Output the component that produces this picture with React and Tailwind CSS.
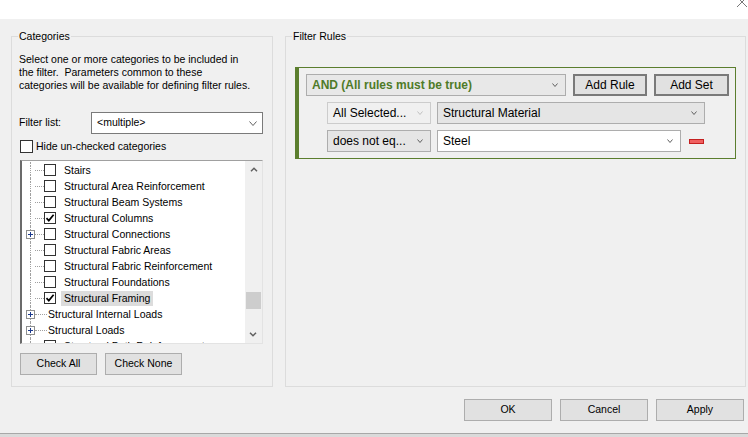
import React from "react";

const Chevron = ({ color = "#606060", w = 7, h = 4 }) => (
  <svg width={w} height={h} viewBox={`0 0 ${w} ${h}`}>
    <path d={`M0.5 0.5L${w / 2} ${h - 0.5}L${w - 0.5} 0.5`} fill="none" stroke={color} strokeWidth="1" />
  </svg>
);

const UpChevron = () => (
  <svg width="8" height="5" viewBox="0 0 8 5">
    <path d="M1 4.2L4 1.2L7 4.2" fill="none" stroke="#606060" strokeWidth="1.5" />
  </svg>
);

const CheckBox = ({ checked }) => (
  <div className="w-[12px] h-[12px] shrink-0 border border-[#333333] bg-white flex items-center justify-center">
    {checked && (
      <svg width="10" height="10" viewBox="0 0 10 10">
        <path d="M1.5 5.2L3.8 7.6L8.6 1.8" fill="none" stroke="#000" strokeWidth="1.7" />
      </svg>
    )}
  </div>
);

const PlusBox = () => (
  <div className="w-[9px] h-[9px] shrink-0 border border-[#8e8f8f] bg-white flex items-center justify-center">
    <svg width="7" height="7" viewBox="0 0 7 7">
      <path d="M1 3.5H6M3.5 1V6" stroke="#1c3a8e" strokeWidth="1" />
    </svg>
  </div>
);

const rows = [
  { label: "Stairs", level: 2 },
  { label: "Structural Area Reinforcement", level: 2 },
  { label: "Structural Beam Systems", level: 2 },
  { label: "Structural Columns", level: 2, checked: true },
  { label: "Structural Connections", level: 2, plus: true },
  { label: "Structural Fabric Areas", level: 2 },
  { label: "Structural Fabric Reinforcement", level: 2 },
  { label: "Structural Foundations", level: 2 },
  { label: "Structural Framing", level: 2, checked: true, selected: true },
  { label: "Structural Internal Loads", level: 1, plus: true },
  { label: "Structural Loads", level: 1, plus: true },
  { label: "Structural Path Reinforcement", level: 2 },
];

const TreeRow = ({ row }) => (
  <div className="flex items-center h-[16px] shrink-0">
    <div className="w-[4px]" />
    {/* vertical connector / expander */}
    <div className="w-[9px] h-full flex flex-col items-center shrink-0">
      <div className="flex-1 border-l border-dotted border-[#a0a0a0]" />
      {row.plus ? <PlusBox /> : <div className="h-[9px] border-l border-dotted border-[#a0a0a0]" />}
      <div className="flex-1 border-l border-dotted border-[#a0a0a0]" />
    </div>
    {row.level === 2 ? (
      <>
        <div className="w-[9px] border-t border-dotted border-[#a0a0a0]" />
        <CheckBox checked={row.checked} />
        <span className={`ml-[5px] px-[3px] leading-[15px] whitespace-nowrap ${row.selected ? "bg-[#dcdcdc]" : ""}`}>
          {row.label}
        </span>
      </>
    ) : (
      <>
        <div className="w-[12px] border-t border-dotted border-[#a0a0a0]" />
        <span className="ml-[1px] leading-[15px] whitespace-nowrap">{row.label}</span>
      </>
    )}
  </div>
);

const Button = ({ children, className = "" }) => (
  <button className={`h-[22px] border border-[#adadad] bg-[#e1e1e1] flex items-center justify-center ${className}`}>
    {children}
  </button>
);

const Combo = ({ className, children, chev = "#606060" }) => (
  <div className={`h-[22px] flex items-center justify-between pl-[5px] pr-[7px] border shrink-0 ${className}`}>
    <span className="whitespace-nowrap">{children}</span>
    <Chevron color={chev} w={6} h={4} />
  </div>
);

export default function App() {
  return (
    <div className="w-[748px] h-[437px] bg-[#f0f0f0] flex flex-col overflow-hidden text-[10.5px] text-black font-['Liberation_Sans',Arial,sans-serif]">
      {/* title bar */}
      <div className="h-[19px] bg-white flex justify-end items-start shrink-0">
        <svg width="12" height="8" viewBox="0 0 12 8" className="mr-[0px]">
          <path d="M1 -3L11 7M11 -3L1 7" stroke="#777" strokeWidth="1" />
        </svg>
      </div>

      {/* group boxes */}
      <div className="flex pl-[11px] gap-[12px] shrink-0">
        <fieldset className="mt-[10px] w-[262px] h-[358px] border border-[#dcdcdc] min-w-0">
          <legend className="ml-[6px] px-[1px] leading-[14px]">Categories</legend>
          <div className="flex flex-col pl-[7px]">
            <p className="mt-[10px] leading-[13px]">
              Select one or more categories to be included in
              <br />
              the filter.&nbsp; Parameters common to these
              <br />
              categories will be available for defining filter rules.
            </p>

            <div className="mt-[20px] flex items-center h-[22px]">
              <span className="w-[72px]">Filter list:</span>
              <div className="w-[172px] h-[22px] border border-[#7a7a7a] bg-white flex items-center justify-between pl-[5px] pr-[5px]">
                <span>&lt;multiple&gt;</span>
                <Chevron w={8} h={5} />
              </div>
            </div>

            <div className="mt-[6px] flex items-center h-[13px] pl-[1px]">
              <div className="w-[13px] h-[13px] border border-[#333333] bg-white" />
              <span className="ml-[3px]">Hide un-checked categories</span>
            </div>

            {/* tree list */}
            <div className="mt-[7px] ml-[1px] w-[243px] h-[184px] flex border-l-2 border-t border-l-[#6b6b6b] border-t-[#a0a0a0] border-r border-b border-r-[#e3e3e3] border-b-[#e3e3e3] bg-white">
              <div className="flex-1 flex flex-col pt-[1px] overflow-hidden">
                {rows.map((r) => (
                  <TreeRow key={r.label} row={r} />
                ))}
              </div>
              <div className="w-[17px] bg-[#f0f0f0] flex flex-col shrink-0">
                <div className="h-[17px] flex items-center justify-center">
                  <UpChevron />
                </div>
                <div className="flex-1">
                  <div className="mt-[114px] h-[17px] mx-[1px] bg-[#cdcdcd]" />
                </div>
                <div className="h-[17px] flex items-center justify-center rotate-180">
                  <UpChevron />
                </div>
              </div>
            </div>

            <div className="mt-[9px] flex gap-[8px] pl-[1px]">
              <Button className="w-[77px]">Check All</Button>
              <Button className="w-[77px]">Check None</Button>
            </div>
          </div>
        </fieldset>

        <fieldset className="mt-[10px] w-[461px] h-[358px] border border-[#dcdcdc] min-w-0">
          <legend className="ml-[6px] px-[1px] leading-[14px]">Filter Rules</legend>
          {/* rule set */}
          <div className="mt-[24px] ml-[9px] w-[441px] h-[92px] border border-[#5b7e2e] border-l-[4px] flex flex-col text-[12px]">
            <div className="mt-[6px] ml-[7px] flex gap-[7px]">
              <Combo className="w-[260px] border-[#adadad] bg-[#e8e8e8]">
                <span className="font-bold text-[#4f7b28]">AND (All rules must be true)</span>
              </Combo>
              <button className="w-[74px] h-[22px] border-2 border-[#7a7a7a] bg-[#e1e1e1]">Add Rule</button>
              <button className="w-[75px] h-[22px] border-2 border-[#7a7a7a] bg-[#e1e1e1]">Add Set</button>
            </div>
            <div className="mt-[6px] ml-[28px] flex gap-[6px]">
              <Combo className="w-[104px] border-[#cccccc] bg-[#f0f0f0]" chev="#c0c0c0">
                All Selected...
              </Combo>
              <Combo className="w-[268px] border-[#adadad] bg-[#e5e5e5]">Structural Material</Combo>
            </div>
            <div className="mt-[6px] ml-[28px] flex items-center gap-[6px]">
              <Combo className="w-[104px] border-[#adadad] bg-[#e5e5e5]">does not eq...</Combo>
              <Combo className="w-[244px] border-[#adadad] bg-white">Steel</Combo>
              <div className="ml-[2px] w-[15px] h-[5px] bg-[#f06060] border border-[#c42020]" />
            </div>
          </div>
        </fieldset>
      </div>

      {/* dialog buttons */}
      <div className="mt-[12px] flex justify-end gap-[8px] pr-[4px] shrink-0">
        <Button className="w-[88px]">OK</Button>
        <Button className="w-[88px]">Cancel</Button>
        <Button className="w-[88px]">Apply</Button>
      </div>

      <div className="flex-1" />
      <div className="h-[4px] shrink-0 border-t border-[#a8a8a8] bg-[#dadada]" />
    </div>
  );
}
